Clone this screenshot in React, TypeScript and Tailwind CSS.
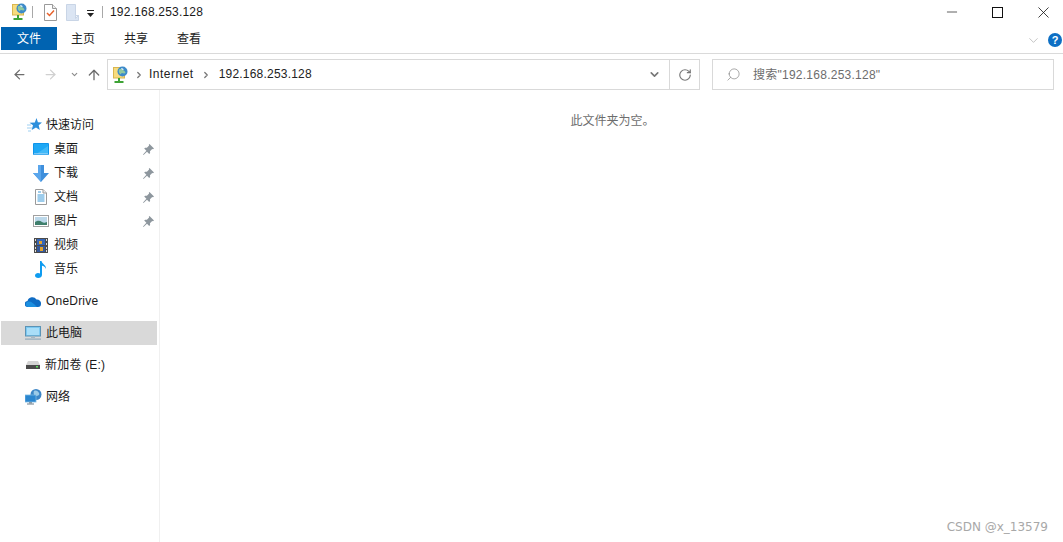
import { ChevronDown, ChevronRight, ArrowLeft, ArrowRight, ArrowUp, RotateCw, Search, Minus, X } from "lucide-react"

const font = { fontFamily: '"Liberation Sans", "Noto Sans CJK SC", sans-serif' }

function NetFolderIcon({ size = 16 }: { size?: number }) {
  return (
    <svg width={size} height={size + 2} viewBox="0 0 16 18">
      <rect x="0.5" y="1.5" width="11" height="10.5" fill="#f7dc7e" stroke="#d9b64f" />
      <circle cx="9.5" cy="5.5" r="5" fill="#3d8bc9" />
      <path d="M6 3.5c2-1 3 0 4 .5s2 1 2.5 3c-1.5 1-2.5 0-3.5 0s-1 2-2 1-1.5-3-1-4.500z" fill="#8fc9a0" />
      <path d="M8 2a3 3 0 0 1 3 1.500l-2 .5z" fill="#dff0fa" />
      <rect x="5" y="12" width="2" height="3" fill="#3fa336" />
      <rect x="1.500" y="15" width="9" height="2" fill="#3fa336" />
    </svg>
  )
}

function PropertiesIcon() {
  return (
    <svg width="13" height="17" viewBox="0 0 13 17">
      <path d="M.5.5h8l4 4v12H.5z" fill="#fff" stroke="#9a9a9a" />
      <path d="M8.500.5v4h4" fill="#eee" stroke="#9a9a9a" />
      <path d="M3 9l2.500 2.500L10 6.500" fill="none" stroke="#e8622c" strokeWidth="1.500" />
    </svg>
  )
}

function BlankDocIcon() {
  return (
    <svg width="13" height="17" viewBox="0 0 13 17">
      <path d="M.5.500h9v11l3 0v5H.5z" fill="#dbe5f3" stroke="#c9d5e6" />
      <path d="M9.500 11.500l3 0-3 3z" fill="#f4f7fb" stroke="#c9d5e6" />
    </svg>
  )
}

function QuickStar() {
  return (
    <svg width="15" height="14" viewBox="0 0 15 14">
      <path d="M9.500 0l1.400 4.300 4.100.2-3.300 2.800 1.100 4.700-3.800-2.500-4.300 2.500 1.300-4.700L2.500 4.800l5.300-.4z" fill="#2d8fdc" />
      <path d="M0 7h4M0 10h5M1 13h3" stroke="#9fd0f2" strokeWidth="1" />
    </svg>
  )
}

function DesktopIcon() {
  return (
    <svg width="16" height="12" viewBox="0 0 16 12">
      <rect x="0" y="0" width="16" height="12" rx="1" fill="#0f94ea" />
      <rect x="1" y="1" width="14" height="9.500" fill="#1ea8f5" />
      <path d="M4 10.500L15 3v7.500z" fill="#41b9f8" />
      <rect x="1" y="10.500" width="14" height=".8" fill="#cfeafc" />
    </svg>
  )
}

function DownloadIcon() {
  return (
    <svg width="16" height="17" viewBox="0 0 16 17">
      <path d="M5 0h6v8h5l-8 9-8-9h5z" fill="#3f8fdc" />
      <path d="M5 0h3v17l-8-9h5z" fill="#5aa6ec" />
    </svg>
  )
}

function DocIcon() {
  return (
    <svg width="12" height="16" viewBox="0 0 12 16">
      <path d="M.5.500h7.500l3.500 3.500v11.500H.5z" fill="#fff" stroke="#9a9a9a" />
      <path d="M8 .500V4h3.500" fill="#eee" stroke="#9a9a9a" />
      <path d="M3 3h3M2.500 6h7M2.500 8h7M2.500 10h7M2.500 12h7" stroke="#3d9ad8" strokeWidth="1" />
    </svg>
  )
}

function PictureIcon() {
  return (
    <svg width="16" height="12" viewBox="0 0 16 12">
      <rect x=".5" y=".5" width="15" height="11" fill="#fff" stroke="#a0a0a0" />
      <rect x="2" y="2" width="12" height="8" fill="#bcd8ea" />
      <path d="M2 7c3-2 5-1.500 7 0s3 .5 5 0v3H2z" fill="#3f7f6c" />
    </svg>
  )
}

function VideoIcon() {
  return (
    <svg width="14" height="15" viewBox="0 0 14 15">
      <rect width="14" height="15" fill="#4b4b4b" />
      <rect x="3" y="1" width="8" height="6" fill="#3566b8" />
      <rect x="3" y="8" width="8" height="6" fill="#34589c" />
      <path d="M5 3h3v3H5zM6 9h3v4H6z" fill="#e2a22c" />
      <path d="M1 1h1v2H1zM1 5h1v2H1zM1 9h1v2H1zM1 12h1v2H1zM12 1h1v2h-1zM12 5h1v2h-1zM12 9h1v2h-1zM12 12h1v2h-1z" fill="#ddd" />
    </svg>
  )
}

function MusicIcon() {
  return (
    <svg width="12" height="17" viewBox="0 0 12 17">
      <path d="M5 0h1.500c.5 3 5 4 4.500 8-.5-2-2.500-3-4-3.300V14c0 1.800-1.800 3-3.800 3S0 16 0 14.500 1.500 12 3 12c.8 0 1.500.2 2 .5z" fill="#0f9cf0" />
    </svg>
  )
}

function CloudIcon() {
  return (
    <svg width="16" height="11" viewBox="0 0 16 11">
      <path d="M3 11a3 3 0 0 1-.5-6A5 5 0 0 1 11.500 3.500 4 4 0 0 1 16 8a3 3 0 0 1-3 3z" fill="#0f6cc4" />
      <path d="M3 11a2.800 2.800 0 0 1 0-5.500c3-.5 4 1 6 2.500l3 3z" fill="#1c8fe0" />
    </svg>
  )
}

function PcIcon() {
  return (
    <svg width="16" height="14" viewBox="0 0 16 14">
      <rect x=".5" y=".5" width="15" height="9.500" fill="#7cc9f2" stroke="#5b93b5" />
      <path d="M2 2h12v7H2z" fill="#a9def8" />
      <rect x="6" y="10" width="4" height="2" fill="#a5b8c4" />
      <rect x="0" y="12.500" width="16" height="1.200" fill="#8fa9ba" />
    </svg>
  )
}

function DriveIcon() {
  return (
    <svg width="14" height="8" viewBox="0 0 14 8">
      <path d="M2 0h10l2 4H0z" fill="#d4d4d4" />
      <rect y="4" width="14" height="4" fill="#4a4a4a" />
      <rect x="10" y="5" width="2" height="1.500" fill="#5fe05f" />
    </svg>
  )
}

function NetworkIcon() {
  return (
    <svg width="17" height="16" viewBox="0 0 17 16">
      <circle cx="11" cy="5.500" r="5.500" fill="#3d86c6" />
      <path d="M9 2c2-1 4 0 5 2s-1 3-3 3-3-3-2-5z" fill="#9ccbe8" />
      <rect x="0" y="6" width="11" height="7" fill="#2b86cf" stroke="#7bb9e4" strokeWidth=".8" />
      <rect x="4" y="13" width="3" height="1.500" fill="#8a9aa6" />
      <rect x="2" y="14.500" width="7" height="1" fill="#6d7f8c" />
    </svg>
  )
}

function Pin() {
  return (
    <svg width="11" height="11" viewBox="0 0 11 11" className="ml-auto mr-[3px]">
      <path d="M6.500 0l4.500 4.500-1 .8-.8-.3-2.200 2.200.1 1.800-.9.900-2.200-2.200L.5 11 0 10.500l3.400-3.700L1.200 4.600l.9-.9 1.800.1L6.100 1.600l-.3-.8z" fill="#8e979e" />
    </svg>
  )
}

const quickAccess = [
  { name: "桌面", icon: <DesktopIcon />, pinned: true },
  { name: "下载", icon: <DownloadIcon />, pinned: true },
  { name: "文档", icon: <DocIcon />, pinned: true },
  { name: "图片", icon: <PictureIcon />, pinned: true },
  { name: "视频", icon: <VideoIcon />, pinned: false },
  { name: "音乐", icon: <MusicIcon />, pinned: false },
]

export default function App() {
  return (
    <div className="relative w-[1063px] h-[542px] bg-white overflow-hidden text-[12px] text-[#1a1a1a]" style={font}>
      {/* Title bar */}
      <div className="flex items-center h-[27px] pb-[3px]">
        <div className="flex items-center w-[110px] pl-[12px]">
          <NetFolderIcon />
          <div className="w-px h-[12px] bg-[#a8a8a8] ml-[4px]" />
          <div className="ml-[11px]"><PropertiesIcon /></div>
          <div className="ml-[9px]"><BlankDocIcon /></div>
          <svg width="8" height="8" viewBox="0 0 8 8" className="ml-[8px] mt-[3px]">
            <path d="M0 0h7v1H0zM0 3h7L3.500 7z" fill="#222" />
          </svg>
          <div className="w-px h-[12px] bg-[#a8a8a8] ml-[7px]" />
        </div>
        <span className="text-[12px] tracking-[0.2px]">192.168.253.128</span>
        <div className="ml-auto flex items-center pr-[10px]">
          <div className="w-[20px] flex justify-center"><Minus size={16} strokeWidth={1} color="#111" /></div>
          <div className="ml-[25px] w-[20px] flex justify-center"><div className="w-[11px] h-[11px] border border-[#111]" /></div>
          <div className="ml-[26px] w-[20px] flex justify-center"><X size={19} strokeWidth={1} color="#111" /></div>
        </div>
      </div>

      {/* Ribbon tabs */}
      <div className="flex items-start h-[27px] border-b border-[#dadada]">
        <div className="ml-px w-[56px] h-[23px] bg-[#0063b1] text-white flex items-center justify-center">文件</div>
        <div className="w-[52px] h-[23px] flex items-center justify-center text-[#222]">主页</div>
        <div className="w-[54px] h-[23px] flex items-center justify-center text-[#222]">共享</div>
        <div className="w-[52px] h-[23px] flex items-center justify-center text-[#222]">查看</div>
        <div className="ml-auto flex items-center h-[26px] pr-px">
          <ChevronDown size={15} strokeWidth={1} color="#a0a0a0" className="mr-[7px]" />
          <div className="w-[14px] h-[14px] rounded-full bg-[#0d6fc4] text-white flex items-center justify-center text-[11px] font-bold">?</div>
        </div>
      </div>

      {/* Navigation row */}
      <div className="flex items-center h-[31px] mt-[5px]">
        <div className="flex items-center w-[107px] pl-[12px]">
          <ArrowLeft size={15} strokeWidth={2} color="#6d6d6d" />
          <ArrowRight size={15} strokeWidth={2} color="#d0d0d0" className="ml-[16px]" />
          <ChevronDown size={9} strokeWidth={3} color="#8a8a8a" className="ml-[12px]" />
          <ArrowUp size={16} strokeWidth={2} color="#6d6d6d" className="ml-[7px]" />
        </div>
        <div className="flex items-center w-[593px] h-[31px] border border-[#d9d9d9]">
          <div className="ml-[5px]"><NetFolderIcon /></div>
          <ChevronRight size={10} strokeWidth={3} color="#777" className="ml-[5px]" />
          <span className="ml-[5px] -mt-px text-[#222] tracking-[0.5px]">Internet</span>
          <ChevronRight size={10} strokeWidth={3} color="#777" className="ml-[7px]" />
          <span className="ml-[8px] -mt-px text-[#222] tracking-[0.2px]">192.168.253.128</span>
          <div className="ml-auto flex items-center justify-center w-[29px]">
            <ChevronDown size={13} strokeWidth={3} color="#777" />
          </div>
          <div className="w-[30px] h-full border-l border-[#d9d9d9] flex items-center justify-center">
            <RotateCw size={14} strokeWidth={2} color="#777" />
          </div>
        </div>
        <div className="flex items-center w-[342px] h-[31px] border border-[#d9d9d9] ml-[12px]">
          <Search size={15} strokeWidth={1} color="#777" className="ml-[13px] -scale-x-100" />
          <span className="ml-[12px] text-[#6d6d6d] tracking-[0.25px]">搜索"192.168.253.128"</span>
        </div>
      </div>

      {/* Body */}
      <div className="flex h-[452px]">
        <nav className="w-[160px] shrink-0 border-r border-[#f0f0f0] pt-[23px]">
          <div className="flex items-center h-[24px] pl-[27px] gap-[4px]">
            <QuickStar />
            <span>快速访问</span>
          </div>
          {quickAccess.map((item) => (
            <div key={item.name} className="flex items-center h-[24px] w-[157px] pl-[33px]">
              <div className="w-[16px] flex justify-center">{item.icon}</div>
              <span className="ml-[5px]">{item.name}</span>
              {item.pinned && <Pin />}
            </div>
          ))}
          <div className="flex items-center h-[24px] pl-[25px] mt-[8px]">
            <CloudIcon />
            <span className="ml-[5px] tracking-[0.2px]">OneDrive</span>
          </div>
          <div className="flex items-center h-[24px] w-[156px] ml-px pl-[24px] mt-[8px] bg-[#d9d9d9]">
            <PcIcon />
            <span className="ml-[5px]">此电脑</span>
          </div>
          <div className="flex items-center h-[24px] pl-[26px] mt-[8px]">
            <DriveIcon />
            <span className="ml-[5px] tracking-[0.2px]">新加卷 (E:)</span>
          </div>
          <div className="flex items-center h-[24px] pl-[25px] mt-[8px]">
            <NetworkIcon />
            <span className="ml-[4px]">网络</span>
          </div>
        </nav>
        <main className="flex-1 flex justify-center pt-[22px]">
          <span className="text-[#6d6d6d] h-[16px] ml-[2px]">此文件夹为空。</span>
        </main>
      </div>

      <span className="absolute right-[15px] bottom-[6px] text-[12px] text-[#a8a8a8]" style={{ fontFamily: '"DejaVu Sans", sans-serif' }}>CSDN @x_13579</span>
    </div>
  )
}
